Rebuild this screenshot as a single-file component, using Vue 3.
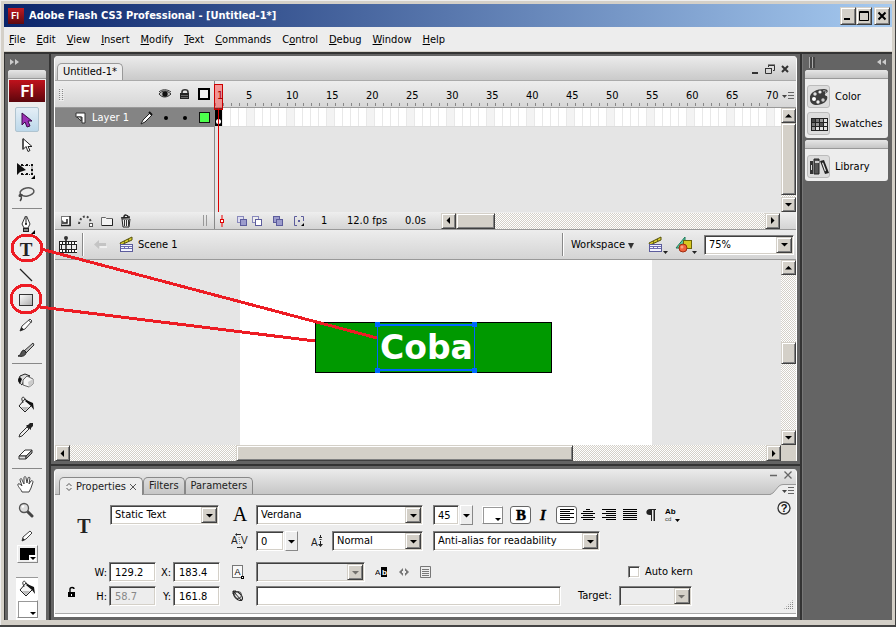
<script setup>
import { h, ref } from 'vue'

const pencilArt = '<path d="M2 14l2-5 8-7 2 2-7 8z" fill="#fff" stroke="#444"/><path d="M2 14l1.500-4 2.500 2.500z" fill="#222"/><path d="M10.500 3l3 3" stroke="#333"/>'
const clapArt = '<path d="M1 7L13 1v3L2 9z" fill="#d9cf2e" stroke="#55500a"/><path d="M5 5l1 2M9 3l1 2" stroke="#55500a"/><rect x="1.500" y="8.500" width="12" height="7" fill="#f4f4ff" stroke="#5c5c9c"/><path d="M2 10.500h11M2 12.500h11M5.500 10v3M9.500 10v3" stroke="#6c6cb0"/>'
const cursorPath = 'M4 1v12l3-3 2 5 3-1-2-5h4z'

const art = {
  app: [16, 16, '<defs><linearGradient id="ag" x2="0" y2="1"><stop stop-color="#c01a22"/><stop offset="1" stop-color="#5e0a10"/></linearGradient></defs><rect width="16" height="16" fill="url(#ag)"/><text x="3" y="11" font-family="Lato, sans-serif" font-size="10" font-weight="700" fill="#fff">Fl</text>'],
  arrow: [16, 16, `<path d="${cursorPath}" fill="#9a2fb4" stroke="#3c0c4c"/>`],
  subarrow: [16, 16, '<path d="M5 1.500v11l3-3 2 5 2-1-2-4h4z" fill="#fff" stroke="#222"/><path d="M5 2v10" stroke="#222"/>'],
  transform: [20, 18, '<path d="M1 2v12l3-3 6-2z" fill="#111"/><path d="M5 4.500h11v9H6" fill="none" stroke="#222" stroke-dasharray="1 1"/><path d="M5 3h2v2H5zM10 3h2v2h-2zM15 3h2v2h-2zM15 8h2v2h-2zM15 12h2v2h-2zM10 12h2v2h-2zM5 12h2v2H5z" fill="#111"/><path d="M19 14v4h-4z" fill="#000"/>'],
  lasso: [18, 18, '<ellipse cx="10" cy="6" rx="7" ry="4" fill="none" stroke="#555" stroke-width="1.500" transform="rotate(-10 10 6)"/><path d="M4 8c-3 1-2 3 0 2s1-2-1-1M4 10c1 2 0 4-1 5" fill="none" stroke="#444" stroke-width="1.300"/>'],
  pen: [20, 18, '<path d="M9.500 0L6 8l2 4h4l2-4-3.500-8z" fill="#fff" stroke="#333"/><path d="M10 1v7" stroke="#222"/><circle cx="10" cy="8" r="1" fill="#111"/><rect x="7.500" y="12.500" width="5" height="3" fill="#888" stroke="#222"/><path d="M19 14v4h-4z" fill="#000"/>'],
  text: [18, 24, '<text x="9" y="18" text-anchor="middle" font-family="Liberation Serif, serif" font-size="19" font-weight="700" fill="#222">T</text>'],
  line: [16, 16, '<path d="M2 2l12 12" stroke="#222" stroke-width="1.300"/>'],
  rect: [20, 16, '<defs><linearGradient id="rg" x2="1" y2="1"><stop stop-color="#fff"/><stop offset="1" stop-color="#aaa"/></linearGradient></defs><rect x="3.500" y="2.500" width="13" height="11" fill="url(#rg)" stroke="#333"/>'],
  pencil: [16, 16, pencilArt],
  smallPencil: [14, 14, '<path d="M2 12l1-4 7-6 2 2-6 6z" fill="#fff" stroke="#444"/><path d="M2 12l1-3 2 2z" fill="#222"/>'],
  brush: [18, 16, '<path d="M16 1L7 9l2 2 8-8z" fill="#bbb" stroke="#333"/><path d="M7 8c-4 1-2 5-6 6 4 1 8 0 8-4z" fill="#555" stroke="#222"/>'],
  ink: [18, 16, '<path d="M3 4l5-2 5 2-5 2-3 7C2 11 1 8 3 4z" fill="#ddd" stroke="#222"/><path d="M3 5C0 7 1 10 3 12l2-5z" fill="#111"/><path d="M6 8l4-4 6 3v5l-4 3-6-2z" fill="#f4f4f4" stroke="#666"/><path d="M11 10l5-3v5l-4 3z" fill="#ccc"/>'],
  bucket: [18, 18, '<path d="M8 3l7 6-7 7-6-6z" fill="#f4f4f4" stroke="#222"/><path d="M8 3c-1-3-4-2-3 1l1 3" fill="none" stroke="#333"/><path d="M9 4l7 3 1 7-3-4-6-5z" fill="#111"/><path d="M4 11h8l-4 4z" fill="#bbb"/>'],
  dropper: [16, 16, '<path d="M9 3l1 0 2-2h3v3l-2 2v2l-5-4z" fill="#222"/><path d="M9 5l2 2-7 7-3 1 1-3z" fill="#eee" stroke="#333"/>'],
  eraser: [18, 14, '<path d="M2 8l6-6h7l-6 6z" fill="#fff" stroke="#333"/><path d="M2 8h7v3H2z" fill="#ddd" stroke="#333"/><path d="M9 8l6-6v3l-6 6z" fill="#999" stroke="#333"/>'],
  hand: [18, 18, '<path d="M5 16C4 13 0 10 1 8c1-1 3 1 4 2L3 4c0-2 2-2 2 0l2 4V2c0-2 2-2 2 0l1 5 1-5c0-1 2-1 2 0l-1 6 2-3c1-1 2 0 2 1l-2 6-2 4z" fill="#fff" stroke="#444"/>'],
  zoom: [16, 16, '<path d="M9 9l5 5" stroke="#444" stroke-width="3" stroke-linecap="round"/><circle cx="6" cy="6" r="4.500" fill="#ddd" stroke="#555" stroke-width="1.300"/><path d="M4 5l2-1" stroke="#fff" stroke-width="2"/>'],
  eye: [14, 12, '<path d="M1 6c3-4 8-4 12 0-4 4-9 4-12 0z" fill="#bbb" stroke="#333"/><path d="M1 4c3-3 8-3 12 0" fill="none" stroke="#333"/><circle cx="7" cy="6" r="2.700" fill="#111"/>'],
  lock: [12, 12, '<path d="M3 6V4c0-3 6-3 6 0v2" fill="none" stroke="#333" stroke-width="1.600"/><rect x="1" y="5" width="9" height="6" fill="#222"/><path d="M2 7.500h7M2 9.500h7" stroke="#666"/>'],
  box: [12, 12, '<rect x="1" y="1" width="10" height="10" fill="#f4f4f4" stroke="#000" stroke-width="2"/>'],
  page: [12, 12, '<path d="M1 1h9v10H7V5H1z" fill="#fff" stroke="#333"/><path d="M2 5l4 4V5z" fill="#ddd" stroke="#333"/>'],
  layerPencil: [14, 14, '<path d="M1 13l2-4 7-7 2 2-7 7z" fill="#fff" stroke="#222"/><path d="M9 1l3 3" stroke="#111" stroke-width="2"/>'],
  newLayer: [12, 12, '<rect x="1.500" y="1.500" width="9" height="9" fill="#fff" stroke="#777"/><path d="M10 1v9.500H1M7 4v4H3" fill="none" stroke="#222" stroke-width="1.500"/><path d="M2 5l4 4H2z" fill="#555"/>'],
  guide: [16, 12, '<path d="M1 9c1-8 9-11 12-2" fill="none" stroke="#444" stroke-width="2" stroke-dasharray="2 2"/><rect x="11.500" y="8.500" width="3" height="3" fill="#fff" stroke="#555"/>'],
  folder: [14, 12, '<path d="M1.500 2.500h4l1 1h6v7h-11z" fill="#f3f3f3" stroke="#666"/><path d="M12.500 4v6.500H2" fill="none" stroke="#222"/>'],
  trash: [12, 14, '<path d="M2 5h8l-1 8H3z" fill="#eee" stroke="#222"/><path d="M4.500 6v6M6.500 6v6M8.500 6v6" stroke="#333"/><path d="M1 4l9-1M4 3c0-3 4-2 4 0" fill="none" stroke="#222" stroke-width="1.500"/>'],
  center: [10, 16, '<path d="M5 2v12" stroke="#e00"/><rect x="3.500" y="6.500" width="3" height="3" fill="#fff" stroke="#d00"/>'],
  onion: [12, 12, '<rect x="1.500" y="1.500" width="6" height="6" fill="#ddddf0" stroke="#8888bb"/><rect x="4.500" y="4.500" width="6" height="6" fill="#9c9ccc" stroke="#5c5c9c"/>'],
  onionLine: [12, 12, '<rect x="1.500" y="1.500" width="6" height="6" fill="#eee" stroke="#8888bb"/><rect x="4.500" y="4.500" width="6" height="6" fill="#fff" stroke="#5c5c9c"/>'],
  onionMulti: [12, 12, '<rect x="1.500" y="1.500" width="6" height="6" fill="#9c9ccc" stroke="#5c5c9c"/><rect x="4.500" y="4.500" width="6" height="6" fill="#9c9ccc" stroke="#5c5c9c"/>'],
  markers: [12, 12, '<path d="M4 1.500H1.500v9H4M8 1.500h2.500V6" fill="none" stroke="#5c5c9c"/><rect x="5" y="5" width="2" height="2" fill="#5c5c9c"/><path d="M11 8v3H8z" fill="#000"/>'],
  film: [18, 18, '<rect x="0" y="5" width="18" height="12" fill="#222"/><path d="M1 9h16v4H1z" fill="#eee"/><path d="M1 7h17M1 15h17" stroke="#fff" stroke-width="2" stroke-dasharray="2 1"/><path d="M7 1v16" stroke="#222" stroke-width="1.500"/><path d="M12.500 9v4M2.500 9v4" stroke="#222"/><circle cx="7" cy="2" r="2" fill="#333"/>'],
  back: [14, 12, '<path d="M6 1v3h7v3H6v3L1 5.500z" fill="#c4c4c4"/><path d="M7 8h7" stroke="#fff"/>'],
  clap: [16, 17, clapArt],
  clapDrop: [20, 18, clapArt + '<path d="M15 15h5l-2.500 3z" fill="#222"/>'],
  symbols: [22, 18, '<path d="M1 12L10 1v11z" fill="#5cc8a0" stroke="#1d7a5a"/><rect x="8.500" y="4.500" width="8" height="8" fill="#d8c820" stroke="#6c640c"/><circle cx="8" cy="12" r="4" fill="#f0623c" stroke="#a02c10"/><circle cx="7" cy="11" r="1.500" fill="#fba080"/><path d="M17 15h5l-2.500 3z" fill="#222"/>'],
  menu: [12, 10, '<path d="M0 4h5L2.500 7z" fill="#444"/><path d="M6 1.500h6M6 4.500h6M6 7.500h6" stroke="#666"/>'],
  palette: [20, 18, '<path d="M1 11C0 4 8 1 15 1c4 0 5 3 2 4-2 1-1 3 1 3 2 5-5 9-10 9-4 0-7-2-7-6z" fill="#3c3c3c"/><path d="M14 3c3-1 4 1 2 2" fill="none" stroke="#bbb"/><circle cx="5" cy="11" r="2" fill="#fff"/><circle cx="6" cy="6" r="1.700" fill="#ddd"/><circle cx="11" cy="4" r="1.600" fill="#eee"/><circle cx="9" cy="14" r="1.700" fill="#eee"/><circle cx="14" cy="12" r="1.700" fill="#ccc"/>'],
  swatches: [18, 16, '<rect x="1" y="2" width="17" height="13" fill="#222"/><path d="M2 3h3v3H2z" fill="#444"/><path d="M6 3h3v3H6zM2 7h3v3H2z" fill="#777"/><path d="M10 3h3v3h-3zM6 7h3v3H6zM2 11h3v3H2z" fill="#999"/><path d="M14 3h3v3h-3zM14 7h3v3h-3zM6 11h3v3H6zM10 11h3v3h-3zM14 11h3v3h-3z" fill="#e2e2e2"/><path d="M10 7h3v3h-3z" fill="#555"/>'],
  library: [20, 18, '<path d="M1 3h3v13H1z" fill="#333"/><path d="M2 7h1v5H2z" fill="#ddd"/><path d="M5 1h5v15H5z" fill="#555" stroke="#222"/><path d="M6 3h4v2H6z" fill="#ccc"/><path d="M11 3l4-1 5 13-4 1z" fill="#222"/><path d="M13 5l1-.5 3 8-1 1z" fill="#eee"/>'],
  fontA: [18, 26, '<text x="9" y="19" text-anchor="middle" font-family="Liberation Serif, serif" font-size="20" fill="#000">A</text>'],
  spacing: [18, 16, '<text x="0" y="11" font-family="Liberation Sans, sans-serif" font-size="10" fill="#222">A</text><text x="10" y="11" font-family="Liberation Sans, sans-serif" font-size="10" fill="#222">V</text><path d="M6 1.500h4M6 14.500h4" stroke="#222"/><path d="M6 0v3L4 1.500zM10 13v3l2-1.500z" fill="#222"/><path d="M8 4l1 8" stroke="#777" stroke-dasharray="1 1"/>'],
  baseline: [14, 14, '<text x="0" y="12" font-family="Liberation Sans, sans-serif" font-size="10" fill="#222">A</text><path d="M9.500 1v3M9.500 7v4M8 3.500h3" stroke="#222" fill="none"/><path d="M7 10h5l-2.500 3zM7.500 6h4L9.500 5z" fill="#222"/>'],
  charBox: [14, 16, '<rect x="1.500" y="1.500" width="10" height="12" fill="#f8f8f8" stroke="#777"/><text x="6.500" y="11" text-anchor="middle" font-family="Liberation Sans, sans-serif" font-size="9" fill="#000">A</text><rect x="10.500" y="12.500" width="2" height="2" fill="#fff" stroke="#000"/>'],
  link: [14, 14, '<ellipse cx="7" cy="7" rx="5.500" ry="3" transform="rotate(45 7 7)" fill="none" stroke="#222" stroke-width="1.300"/><circle cx="7" cy="6" r="3.500" fill="none" stroke="#444"/><path d="M2 2l9 10M2 2h3M2 2v3" stroke="#222"/>'],
  bold: [16, 18, '<text x="8" y="14" text-anchor="middle" font-family="Liberation Serif, serif" font-size="15" font-weight="700" stroke="#000" stroke-width=".5">B</text>'],
  italic: [16, 18, '<text x="8" y="14" text-anchor="middle" font-family="Liberation Serif, serif" font-size="15" font-weight="700" font-style="italic" stroke="#000" stroke-width=".3">I</text>'],
  alignL: [16, 14, '<path d="M1 1.500h14M1 3.500h10M1 5.500h14M1 7.500h10M1 9.500h14M1 11.500h10" stroke="#000"/>'],
  alignC: [16, 14, '<path d="M6 1.500h4M3 3.500h10M1 5.500h14M3 7.500h10M1 9.500h14M3 11.500h10" stroke="#000"/>'],
  alignR: [16, 14, '<path d="M1 1.500h14M5 3.500h10M1 5.500h14M5 7.500h10M1 9.500h14M5 11.500h10" stroke="#000"/>'],
  justify: [16, 14, '<path d="M1 1.500h14M1 3.500h14M1 5.500h14M1 7.500h14M1 9.500h14M1 11.500h14" stroke="#000"/>'],
  pilcrow: [12, 14, '<path d="M6 7C0 8 0 1 5 1h6v1h-1v11H8.500V2H7v11H6z" fill="#222"/>'],
  abcd: [18, 18, '<text x="1" y="8" font-family="Liberation Sans, sans-serif" font-size="8" font-weight="700">Ab</text><text x="1" y="15" font-family="Liberation Sans, sans-serif" font-size="6" fill="#444">cd</text><path d="M11 13h5l-2.500 3z"/>'],
  selectable: [13, 12, '<text x="0" y="9" font-family="Liberation Sans, sans-serif" font-size="8">A</text><rect x="6" y="1" width="6" height="10" fill="#000"/><text x="7" y="9" font-family="Liberation Sans, sans-serif" font-size="8" font-weight="700" fill="#fff">b</text>'],
  html: [12, 12, '<path d="M5 2v8L1 6zM7 2v8l4-4z" fill="#777"/><path d="M4 5v2h1V5zM8 5v2H7V5z" fill="#eee"/>'],
  borderText: [12, 12, '<path d="M.5 .5h10v11H.5zM2 3.500h7M2 5.500h7M2 7.500h7M2 9.500h7" fill="none" stroke="#777"/>'],
  padlock: [10, 12, '<path d="M3 6V3c0-2 4-2 4 0" fill="none" stroke="#000" stroke-width="1.400"/><rect x="1" y="6" width="7" height="5" fill="#000"/><path d="M4 8h1v2H4z" fill="#fff"/>'],
  bigT: [18, 26, '<text x="9" y="19" text-anchor="middle" font-family="Liberation Serif, serif" font-size="20" font-weight="700" fill="#222">T</text>'],
  help: [14, 14, '<circle cx="7" cy="7" r="6" fill="#f4f4f4" stroke="#333" stroke-width="1.300"/><text x="7" y="11" text-anchor="middle" font-family="Liberation Sans, sans-serif" font-size="11" font-weight="700" fill="#111">?</text>'],
  minimize: [10, 10, '<path d="M1 8h6" stroke="#000" stroke-width="2"/>'],
  maximize: [10, 10, '<path d="M.5 .5h9v9h-9zM0 1.500h10" fill="none" stroke="#000"/>'],
  close: [10, 10, '<path d="M1.500 1.500l7 7M8.500 1.500l-7 7" stroke="#000" stroke-width="2"/>'],
  docMin: [10, 10, '<path d="M2 9h6" stroke="#333" stroke-width="2"/>'],
  restore: [10, 10, '<path d="M3.500 3V1.500h6v5H8M3 1h7" fill="none" stroke="#333"/><path d="M.5 4.500h6v5h-6zM0 4.500h7" fill="none" stroke="#333"/>'],
  docClose: [10, 10, '<path d="M2 2l6 6M8 2l-6 6" stroke="#333" stroke-width="2"/>'],
  panelMin: [10, 10, '<path d="M1 5.500h7" stroke="#666" stroke-width="1.500"/>'],
  panelClose: [10, 10, '<path d="M1.500 1.500l7 7M8.500 1.500l-7 7" stroke="#666" stroke-width="1.300"/>'],
  up: [7, 7, '<path d="M0 5.500h7L3.500 2z"/>'],
  down: [7, 7, '<path d="M0 2h7L3.500 5.500z"/>'],
  bigDown: [8, 8, '<path d="M1 2h6L4 8z" fill="#333"/>'],
  left: [7, 7, '<path d="M5 0v7L1.500 3.500z"/>'],
  right: [7, 7, '<path d="M2 0v7l3.500-3.500z"/>'],
  expand: [10, 8, '<path d="M0 1l4 3-4 3zM5 1l4 3-4 3z" fill="#ccc"/>'],
  collapse: [10, 8, '<path d="M4 1L0 4l4 3zM9 1L5 4l4 3z" fill="#ccc"/>'],
  updown: [8, 10, '<path d="M1.500 4L4 1.500 6.500 4M1.500 6L4 8.500 6.500 6" fill="none" stroke="#555"/>']
}

const Ico = (props) => {
  const [w, ht, inner] = art[props.name]
  return h('svg', { width: w, height: ht, viewBox: `0 0 ${w} ${ht}`, 'aria-hidden': 'true', innerHTML: inner })
}
Ico.props = ['name']

const menus = [['', 'F', 'ile'], ['', 'E', 'dit'], ['', 'V', 'iew'], ['', 'I', 'nsert'], ['', 'M', 'odify'], ['', 'T', 'ext'], ['', 'C', 'ommands'], ['C', 'o', 'ntrol'], ['', 'D', 'ebug'], ['', 'W', 'indow'], ['', 'H', 'elp']]
const toolGroups = [
  ['arrow', 'subarrow', 'transform', 'lasso'],
  ['pen', 'text', 'line', 'rect', 'pencil', 'brush'],
  ['ink', 'bucket', 'dropper', 'eraser'],
  ['hand', 'zoom']
]
const activeTool = ref('arrow')
const marks = [1, ...Array.from({ length: 14 }, (_, i) => (i + 1) * 5)]
const docks = [['Color', 'Swatches'], ['Library']]
const dockIcons = { Color: 'palette', Swatches: 'swatches', Library: 'library' }
const aligns = ['alignL', 'alignC', 'alignR', 'justify']
const form = ref({ type: 'Static Text', font: 'Verdana', size: '45', spacing: '0', pos: 'Normal', aa: 'Anti-alias for readability', w: '129.2', h: '58.7', x: '183.4', y: '161.8', url: '', kern: false })
</script>

<template>
  <div class="window">
    <header class="title">
      <Ico name="app" />
      <h1>Adobe Flash CS3 Professional - [Untitled-1*]</h1>
      <div class="winbtns">
        <button class="raised" aria-label="Minimize"><Ico name="minimize" /></button>
        <button class="raised" aria-label="Maximize"><Ico name="maximize" /></button>
        <button class="raised last" aria-label="Close"><Ico name="close" /></button>
      </div>
    </header>
    <nav class="menubar">
      <a v-for="m in menus" :key="m.join('')" href="#">{{ m[0] }}<u>{{ m[1] }}</u>{{ m[2] }}</a>
    </nav>

    <main class="work">
      <aside class="tooldock">
        <div class="dockhead"><Ico name="expand" /></div>
        <div class="toolbar">
          <div class="grip"></div>
          <div class="fl">Fl</div>
          <div v-for="(g, i) in toolGroups" :key="i" class="group">
            <button v-for="t in g" :key="t" class="tool" :class="{ on: t === activeTool }" :aria-label="t" @click="activeTool = t"><Ico :name="t" /></button>
          </div>
          <div class="colors">
            <Ico name="smallPencil" />
            <button class="swatch black" aria-label="Stroke color"><i></i></button>
          </div>
          <div class="colors fill">
            <Ico name="bucket" />
            <button class="swatch" aria-label="Fill color"><i></i></button>
          </div>
        </div>
      </aside>

      <div class="center">
        <section class="doc">
          <div class="doctabs">
            <button class="doctab">Untitled-1*</button>
            <span class="docbtns"><Ico name="docMin" /><Ico name="restore" /><Ico name="docClose" /></span>
          </div>
          <div class="timeline">
            <div class="layers">
              <div class="layerhead"><span class="dots"></span><span class="cols"><Ico name="eye" /><Ico name="lock" /><Ico name="box" /></span></div>
              <div class="layer"><Ico name="page" /><span class="lname">Layer 1</span><Ico name="layerPencil" /><b></b><b></b><span class="green"></span></div>
            </div>
            <div class="frames">
              <div class="ruler">
                <span v-for="m in marks" :key="m" class="mark" :class="{ first: m === 1 }">{{ m }}</span>
                <Ico name="menu" class="rmenu" />
              </div>
              <div class="framebody">
                <div class="track"><span class="key"></span></div>
                <div class="vscroll">
                  <button class="raised sb" aria-label="Up"><Ico name="up" /></button>
                  <span class="raised thumb big"></span>
                  <button class="raised sb end" aria-label="Down"><Ico name="down" /></button>
                </div>
              </div>
              <span class="playhead"></span>
            </div>
          </div>
          <div class="tlfoot">
            <div class="lefttools"><Ico name="newLayer" /><Ico name="guide" /><Ico name="folder" /><Ico name="trash" /><span class="bars"></span></div>
            <div class="status">
              <Ico name="center" /><span class="onions"><Ico name="onion" /><Ico name="onionLine" /></span><Ico name="onionMulti" /><Ico name="markers" />
            </div>
            <span class="num">1</span><span class="fps">12.0 fps</span><span class="secs">0.0s</span>
            <div class="hscroll">
              <button class="raised sb" aria-label="Left"><Ico name="left" /></button>
              <span class="raised thumb short"></span>
              <button class="raised sb end" aria-label="Right"><Ico name="right" /></button>
            </div>
          </div>
          <div class="editbar">
            <Ico name="film" /><span class="vsep"></span><Ico name="back" class="back" /><Ico name="clap" /><span class="scene">Scene 1</span>
            <div class="editright">
              <span class="vsep"></span>
              <button class="plain">Workspace <Ico name="bigDown" /></button>
              <Ico name="clapDrop" /><Ico name="symbols" />
              <span class="combo zoomsel"><select aria-label="Zoom"><option>75%</option></select><i class="raised"><Ico name="down" /></i></span>
            </div>
          </div>
          <div class="stagewrap">
            <div class="pasteboard">
              <div class="canvas">
                <div class="banner"><div class="textbox">Coba<i></i><i></i><i></i><i></i></div></div>
              </div>
            </div>
            <div class="vscroll stagev">
              <button class="raised sb" aria-label="Up"><Ico name="up" /></button>
              <span class="raised thumb small"></span>
              <button class="raised sb" aria-label="Down"><Ico name="down" /></button>
            </div>
          </div>
          <div class="stagefoot">
            <div class="hscroll">
              <button class="raised sb" aria-label="Left"><Ico name="left" /></button>
              <span class="raised thumb long"></span>
              <button class="raised sb end" aria-label="Right"><Ico name="right" /></button>
            </div>
            <span class="corner"></span>
          </div>
        </section>

        <section class="props">
          <div class="ptabs">
            <button class="ptab on"><Ico name="updown" />Properties<svg width="8" height="8" viewBox="0 0 8 8"><path d="M1 1l6 6M7 1l-6 6" stroke="#555" /></svg></button>
            <button class="ptab">Filters</button>
            <button class="ptab">Parameters</button>
            <span class="pbtns"><Ico name="panelMin" /><Ico name="panelClose" /></span>
            <span class="notch"><svg width="26" height="11" viewBox="0 0 26 11"><path d="M0 11L3 9L9 2Q11 0.500 13 0.500H26V11z" fill="#ededed" /><path d="M0 10.500L3 9L9 2Q11 0.500 13 0.500H26" fill="none" stroke="#999" /></svg><Ico name="menu" /></span>
          </div>
          <div class="pbody">
            <div class="who"><Ico name="bigT" /><Ico name="padlock" /></div>
            <div class="geo">
              <span class="combo"><select v-model="form.type" aria-label="Text type"><option>Static Text</option></select><i class="raised"><Ico name="down" /></i></span>
              <div class="xy">
                <label for="fw">W:</label><input id="fw" v-model="form.w" class="field"><label for="fx">X:</label><input id="fx" v-model="form.x" class="field">
                <label for="fh">H:</label><input id="fh" v-model="form.h" class="field" disabled><label for="fy">Y:</label><input id="fy" v-model="form.y" class="field">
              </div>
            </div>
            <div class="fmt">
              <div class="row">
                <span class="ic"><Ico name="fontA" /></span>
                <span class="combo font"><select v-model="form.font" aria-label="Font"><option>Verdana</option></select><i class="raised"><Ico name="down" /></i></span>
                <span class="spin size"><input v-model="form.size" class="field" aria-label="Size"><button aria-label="Size slider"><Ico name="down" /></button></span>
                <button class="swatch ink" aria-label="Text color"><i></i></button>
                <button class="fb on" aria-label="Bold"><Ico name="bold" /></button>
                <button class="fb" aria-label="Italic"><Ico name="italic" /></button>
                <span class="aligns"><button v-for="(a, i) in aligns" :key="a" class="fb" :class="{ on: i === 0 }" :aria-label="a"><Ico :name="a" /></button></span>
                <button class="fb" aria-label="Paragraph"><Ico name="pilcrow" /></button>
                <button class="fb" aria-label="Orientation"><Ico name="abcd" /></button>
              </div>
              <div class="row">
                <span class="ic"><Ico name="spacing" /></span>
                <span class="spin"><input v-model="form.spacing" class="field" aria-label="Letter spacing"><button aria-label="Spacing slider"><Ico name="down" /></button></span>
                <span class="ic base"><Ico name="baseline" /></span>
                <span class="combo pos"><select v-model="form.pos" aria-label="Character position"><option>Normal</option></select><i class="raised"><Ico name="down" /></i></span>
                <span class="combo aa"><select v-model="form.aa" aria-label="Font rendering"><option>Anti-alias for readability</option></select><i class="raised"><Ico name="down" /></i></span>
              </div>
              <div class="row third">
                <span class="ic"><Ico name="charBox" /></span>
                <span class="combo dis var"><select disabled aria-label="Line type"></select><i class="raised"><Ico name="down" /></i></span>
                <span class="minis"><Ico name="selectable" /><Ico name="html" /><Ico name="borderText" /></span>
                <label class="kern"><input v-model="form.kern" type="checkbox">Auto kern</label>
              </div>
              <div class="row fourth">
                <span class="ic"><Ico name="link" /></span>
                <input v-model="form.url" class="field url" aria-label="URL link">
                <label for="target">Target:</label>
                <span class="combo dis target"><select id="target" disabled></select><i class="raised"><Ico name="down" /></i></span>
              </div>
            </div>
            <div class="helpcol"><Ico name="help" /><span class="resize"></span></div>
          </div>
        </section>
      </div>

      <aside class="rightdock">
        <div class="dockhead"><span class="bars"></span><Ico name="collapse" /></div>
        <div v-for="(d, i) in docks" :key="i" class="dockpanel">
          <div class="grip"></div>
          <button v-for="n in d" :key="n" class="dockitem"><span><Ico :name="dockIcons[n]" /></span>{{ n }}</button>
        </div>
      </aside>
    </main>

    <svg class="notes" width="400" height="360" viewBox="0 0 400 360" fill="none" stroke="#ed1c24" stroke-width="3" aria-hidden="true">
      <ellipse cx="27" cy="248" rx="15" ry="13" /><path d="M41 249L377 338" />
      <ellipse cx="26" cy="299" rx="15" ry="14" /><path d="M40 307L315 341" />
    </svg>
  </div>
</template>

<style>
body { margin: 0; }
</style>

<style scoped>
* { box-sizing: border-box; }
.window { position: relative; display: flex; flex-direction: column; min-height: 100vh; padding: 4px 3px 7px 4px; background: #d4d0c8; border-right: 1px solid #404040; font: 11px/14px "DejaVu Sans Condensed", "Noto Sans", sans-serif; color: #000; box-shadow: inset 0 -2px #444, inset 1px 1px #eee; }
button, input, select { font: inherit; color: inherit; margin: 0; padding: 0; border: 0; background: none; border-radius: 0; }
svg { display: block; flex: none; }
.raised { display: flex; align-items: center; justify-content: center; background: #d4d0c8; border: 1px solid; border-color: #d4d0c8 #404040 #404040 #d4d0c8; box-shadow: inset 1px 1px #fff, inset -1px -1px #808080; }

.title { display: flex; align-items: center; gap: 5px; height: 23px; padding: 0 2px 0 4px; background: linear-gradient(90deg, #0a246a, #a6caf0); }
.title h1 { flex: 1; margin: 0; font: bold 11px/14px "DejaVu Sans Condensed", sans-serif; color: #fff; white-space: nowrap; }
.winbtns { display: flex; }
.winbtns .raised { width: 16px; height: 18px; }
.winbtns .last { margin-left: 2px; }
.menubar { display: flex; gap: 11px; height: 25px; padding: 6px 5px; background: #ededed; border-bottom: 1px solid #d4d0c8; }
.menubar a { color: #000; text-decoration: none; }

.work { flex: 1; display: flex; background: #646464; border-top: 2px solid #333; }
.tooldock { width: 45px; padding: 0 3px; border-left: 1px solid #333; display: flex; flex-direction: column; }
.dockhead { display: flex; align-items: center; justify-content: space-between; height: 16px; padding-left: 2px; }
.toolbar { flex: 1; background: #ededed; border-radius: 3px 3px 0 0; display: flex; flex-direction: column; align-items: center; }
.grip { height: 9px; align-self: stretch; background: linear-gradient(#e6e6e6, #c6c6c6); border-bottom: 1px solid #999; border-radius: 3px 3px 0 0; }
.fl { width: 36px; height: 22px; margin: 1px 0 5px; background: linear-gradient(#c0121c, #5c060c); color: #fff; font: bold 17px/22px Lato, sans-serif; text-align: center; }
.group { width: 30px; padding: 0 0 1px; margin-bottom: 3px; border-bottom: 1px solid #888; display: flex; flex-direction: column; align-items: center; }
.group:nth-last-child(3) { border: 0; margin: 0; }
.tool { width: 24px; height: 25px; padding-right: 2px; display: flex; align-items: center; justify-content: center; }
.tool.on { background: linear-gradient(#e4eef6, #bcd8ea); border: 1px solid #b0c4d0; border-radius: 2px; }
.colors { width: 22px; height: 40px; margin-bottom: 14px; padding-top: 6px; display: flex; flex-direction: column; align-items: center; justify-content: space-between; }
.colors.fill { flex: 1; margin: 0; padding-top: 2px; gap: 2px; justify-content: flex-start; background: #fff; border-top: 1px solid #999; }
.swatch { position: relative; flex: none; width: 21px; height: 18px; background: #fff; border: 1px solid; border-color: #fff #888 #888 #fff; box-shadow: inset 1px 1px #999, inset -1px -1px #fff; }
.swatch.black { background: #000; box-shadow: inset 0 0 0 2px #ededed; }
.swatch i { position: absolute; right: 1px; bottom: 1px; width: 7px; height: 6px; background: #fff; }
.swatch i::after { content: ""; position: absolute; left: 1px; top: 2px; border: 3px solid transparent; border-top-color: #000; border-bottom: 0; }

.center { flex: 1; min-width: 0; display: flex; flex-direction: column; padding: 2px 3px 3px; border: solid #333; border-width: 0 2px; }
.doc { flex: 1; display: flex; flex-direction: column; background: #e5e5e5; border-radius: 4px 4px 0 0; overflow: hidden; border: solid #fff; border-width: 0 1px 0 1px; }
.doctabs { display: flex; align-items: flex-end; justify-content: space-between; height: 25px; padding: 0 6px 0 2px; background: linear-gradient(#ececec, #cacaca); border-bottom: 1px solid #aaa; }
.doctab { height: 17px; padding: 0 5px; background: #ededed; border: 1px solid #999; border-bottom: 0; border-radius: 5px 5px 0 0; }
.docbtns { display: flex; gap: 5px; padding-bottom: 6px; }
.timeline { display: flex; height: 131px; }
.layers { width: 160px; border-right: 1px solid #888; }
.layerhead { display: flex; justify-content: space-between; align-items: center; height: 27px; padding: 0 4px; background: linear-gradient(#ededed, #d6d6d6); border-bottom: 1px solid #999; }
.dots { width: 5px; height: 13px; background: repeating-linear-gradient(#ededed 0 1px, transparent 1px 2px), repeating-linear-gradient(90deg, #888 0 1px, transparent 1px 3px); }
.cols { display: flex; align-items: center; gap: 7px; }
.layer { display: flex; align-items: center; height: 19px; padding: 0 4px 0 20px; background: #848484; color: #fff; }
.lname { width: 47px; padding-left: 5px; white-space: nowrap; }
.layer svg + .lname + svg { margin-left: 6px; }
.layer b { width: 4px; height: 4px; margin-left: 10px; background: #000; border-radius: 2px; }
.layer b + b { margin-left: 15px; }
.green { width: 11px; height: 11px; margin-left: auto; background: #4cff4c; border: 1px solid #111; }
.frames { position: relative; flex: 1; min-width: 0; display: flex; flex-direction: column; }
.ruler { display: flex; align-items: center; height: 27px; padding-top: 3px; background: repeating-linear-gradient(90deg, #888 0 1px, transparent 1px 8px) 0 22px / 560px 3px no-repeat, linear-gradient(#ededed, #d6d6d6); border-bottom: 1px solid #999; }
.mark { position: relative; z-index: 1; width: 40px; flex: none; }
.mark.first { width: 31px; padding-left: 2px; color: #a00; }
.mark:nth-last-of-type(1) { width: 14px; }
.rmenu { margin-left: 2px; }
.framebody { flex: 1; display: flex; }
.track { flex: 1; height: 19px; border-bottom: 1px solid #ddd; background: repeating-linear-gradient(90deg, transparent 0 7px, #e8e8e8 7px 8px), repeating-linear-gradient(90deg, #fff 0 32px, #f3f3f3 32px 40px); }
.key { display: block; position: relative; width: 7px; height: 18px; background: #000; }
.key::after { content: ""; position: absolute; left: 1px; bottom: 2px; width: 5px; height: 5px; border-radius: 3px; background: #fff; }
.playhead { position: absolute; left: -1px; top: 3px; bottom: 0; width: 9px; }
.playhead::before { content: ""; display: block; height: 24px; background: rgba(255, 70, 70, .5); border: 1px solid #c00; }
.playhead::after { content: ""; position: absolute; left: 4px; top: 24px; bottom: 0; width: 1px; background: #d00; }
.vscroll, .hscroll { display: flex; background: repeating-conic-gradient(#d4d0c8 0 25%, #fff 0 50%) 0 0 / 2px 2px; }
.vscroll { width: 15px; flex-direction: column; }
.hscroll { flex: 1; height: 16px; }
.sb { flex: none; width: 15px; height: 15px; }
.hscroll .sb { height: 16px; }
.vscroll .end { margin-top: auto; }
.hscroll .end { margin-left: auto; }
.thumb.big { flex: 1; margin-bottom: 2px; }
.thumb.short { width: 39px; }
.thumb.long { width: 337px; margin-left: 166px; }
.stagev .thumb.small { height: 22px; margin: 67px 0 auto; }

.tlfoot { display: flex; align-items: center; height: 18px; background: linear-gradient(#eee, #d4d4d4); border-bottom: 1px solid #999; padding-right: 16px; }
.lefttools { display: flex; align-items: center; gap: 6px; align-self: stretch; width: 160px; padding: 0 5px; border-right: 1px solid #888; }
.lefttools .bars { margin-left: auto; }
.bars { width: 6px; height: 11px; background: repeating-linear-gradient(90deg, #999 0 1px, transparent 1px 3px); }
.status { display: flex; align-items: center; gap: 9px; padding-left: 2px; }
.onions { display: flex; gap: 3px; }
.num { width: 42px; padding-left: 16px; }
.fps { width: 58px; white-space: nowrap; }
.secs { width: 36px; }
.editbar { display: flex; align-items: center; height: 30px; padding: 0 2px 0 4px; background: linear-gradient(#ededed, #d4d4d4); border-bottom: 1px solid #999; }
.vsep { width: 2px; height: 23px; background: #888; border-right: 1px solid #fff; margin-left: 5px; }
.back { margin: 0 12px 0 9px; }
.scene { padding-left: 3px; }
.editright { display: flex; align-items: center; gap: 7px; margin-left: auto; }
.plain { display: flex; align-items: center; gap: 2px; margin-right: 6px; }
.zoomsel { width: 90px; }

.stagewrap { flex: 1; display: flex; min-height: 120px; }
.pasteboard { flex: 1; display: flex; padding: 0 129px 0 185px; }
.canvas { position: relative; flex: 1; background: #fff; }
.banner { position: absolute; left: 75px; top: 62px; width: 237px; height: 51px; background: #090; border: 1px solid #000; }
.textbox { position: absolute; left: 61px; top: 1px; width: 98px; height: 47px; border: solid #06f; border-width: 2px 1px; padding-left: 2px; color: #fff; font: bold 33px/44px "DejaVu Sans", sans-serif; }
.textbox i { position: absolute; width: 5px; height: 5px; background: #06f; }
.textbox i:nth-child(1) { left: -3px; top: -4px; }
.textbox i:nth-child(2) { right: -3px; top: -4px; }
.textbox i:nth-child(3) { left: -3px; bottom: -4px; }
.textbox i:nth-child(4) { right: -3px; bottom: -4px; }
.stagefoot { display: flex; }
.corner { width: 15px; background: #d4d0c8; }

.props { margin-top: 8px; background: #ededed; border-radius: 4px 4px 0 0; border: solid #fff; border-width: 0 1px 3px; position: relative; }
.props::before { content: ""; position: absolute; left: -4px; right: -4px; top: -5px; height: 2px; background: #333; }
.ptabs { position: relative; display: flex; align-items: flex-end; height: 26px; padding-left: 4px; background: linear-gradient(#ececec, #c6c6c6); border-bottom: 1px solid #999; border-radius: 4px 4px 0 0; }
.ptab { display: flex; align-items: center; gap: 3px; height: 17px; padding: 0 5px; border: 1px solid #888; border-bottom: 0; border-radius: 5px 5px 0 0; background: linear-gradient(#ddd, #c6c6c6); color: #222; }
.ptab.on { height: 18px; margin-bottom: -1px; background: #ededed; }
.pbtns { display: flex; gap: 4px; margin: 0 3px 14px auto; }
.notch { position: absolute; right: 0; bottom: -1px; }
.notch svg + svg { position: absolute; right: 2px; top: 2px; }
.pbody { display: flex; height: 119px; padding: 10px 2px 4px 10px; border-bottom: 1px solid #aaa; }
.who { display: flex; flex-direction: column; justify-content: space-between; width: 28px; padding: 9px 0 11px 2px; }
.who svg:first-child { margin-left: 8px; }
.geo { width: 127px; display: flex; flex-direction: column; justify-content: space-between; }
.geo > .combo { width: 109px; margin-left: 17px; }
.xy { display: grid; grid-template-columns: 14px 47px 13px 47px; column-gap: 2px; row-gap: 4px; align-items: center; padding-bottom: 3px; }
.xy label { white-space: nowrap; text-align: right; padding-top: 2px; }
.field { height: 20px; background: #fff; border: 1px solid; border-color: #808080 #fff #fff #808080; box-shadow: inset 1px 1px #404040, inset -1px -1px #d4d0c8; padding: 0 5px; min-width: 0; outline: 0; }
.xy .field { width: 47px; }
.field:disabled { background: #ededed; color: #888; }
.combo { position: relative; display: flex; height: 20px; background: #fff; border: 1px solid; border-color: #808080 #fff #fff #808080; box-shadow: inset 1px 1px #404040, inset -1px -1px #d4d0c8; }
.combo select { appearance: none; width: 100%; padding: 0 18px 0 4px; outline: 0; }
.combo > i { position: absolute; right: 1px; top: 1px; bottom: 1px; width: 16px; pointer-events: none; }
.combo.dis { background: #ededed; }
.dis i svg { opacity: .45; }
.fmt { flex: 1; padding-left: 11px; display: flex; flex-direction: column; }
.row { display: flex; align-items: center; height: 20px; margin-bottom: 6px; }
.row.third { margin: 5px 0 4px; }
.row.fourth { margin: 0; }
.ic { width: 25px; flex: none; display: flex; }
.font { width: 167px; margin-right: 10px; }
.spin { display: flex; gap: 1px; }
.spin .field { width: 28px; padding: 0 4px; }
.spin button { width: 13px; border: 1px solid; border-color: #fff #888 #888 #fff; display: flex; align-items: center; justify-content: center; }
.spin.size .field { width: 26px; }
.ink { margin: 0 7px 0 9px; }
.fb { min-width: 21px; height: 18px; display: flex; align-items: center; justify-content: center; }
.fb.on { background: #fff; border: 1px solid #666; border-radius: 3px; }
.fb + .fb { margin-left: 1px; }
.aligns { display: flex; margin-left: 3px; }
.aligns .fb + .fb { margin: 0; }
.base { width: 21px; margin-left: 13px; }
.pos { width: 91px; margin-right: 10px; }
.aa { width: 167px; }
.var { width: 109px; }
.minis { display: flex; gap: 10px; margin-left: 10px; }
.kern { display: flex; align-items: center; gap: 5px; margin-left: 196px; }
.kern input { appearance: none; width: 12px; height: 12px; background: #fff; border: 1px solid; border-color: #808080 #fff #fff #808080; box-shadow: inset 1px 1px #404040, inset -1px -1px #d4d0c8; }
.kern input:checked { background: #404040; }
.url { width: 305px; margin-right: 17px; }
.target { width: 73px; margin-left: 7px; }
.helpcol { display: flex; flex-direction: column; justify-content: space-between; align-items: flex-end; }
.helpcol > svg { margin-right: 3px; margin-top: -4px; }
.resize { width: 10px; height: 10px; background: repeating-linear-gradient(#ededed 0 1px, transparent 1px 2px), repeating-linear-gradient(90deg, #888 0 1px, transparent 1px 2px); clip-path: polygon(100% 0, 100% 100%, 0 100%); }

.rightdock { width: 90px; padding: 0 4px 0 2px; border-left: 1px solid #777; display: flex; flex-direction: column; }
.rightdock .dockhead { padding: 0 1px 0 4px; }
.rightdock .bars { background: repeating-linear-gradient(90deg, #aaa 0 1px, #444 1px 3px); }
.dockpanel { background: #ededed; border-radius: 3px; margin-bottom: 2px; padding-bottom: 2px; }
.dockitem { display: flex; align-items: center; gap: 5px; padding: 0 2px; margin: 2px 0 0; height: 25px; white-space: nowrap; }
.dockitem:nth-child(2) { margin-top: 5px; }
.dockitem span { display: flex; align-items: center; justify-content: center; width: 23px; height: 23px; background: #ddd; border: 1px solid #bbb; border-radius: 3px; }
.notes { position: absolute; left: 0; top: 0; pointer-events: none; shape-rendering: crispEdges; }
</style>
